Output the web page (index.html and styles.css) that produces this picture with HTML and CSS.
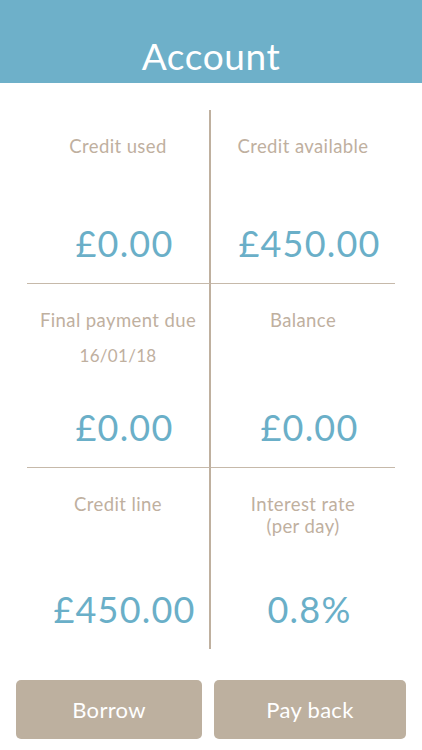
FILE: index.html
```html
<!DOCTYPE html>
<html lang="en">
  <head>
    <meta charset="UTF-8" />
    <meta name="viewport" content="width=device-width, initial-scale=1" />
    <title>Account</title>
    <link rel="stylesheet" href="styles.css">
  </head>
  <body>
    <header class="topbar">
      <h1>Account</h1>
    </header>
    <main>
      <section class="summary">
        <div class="cell left row-1">
          <div class="label">Credit used</div>
          <div class="value">£0.00</div>
        </div>
        <div class="cell right row-1">
          <div class="label">Credit available</div>
          <div class="value">£450.00</div>
        </div>
        <div class="cell left row-2">
          <div class="label">Final payment due</div>
          <div class="sub">16/01/18</div>
          <div class="value">£0.00</div>
        </div>
        <div class="cell right row-2">
          <div class="label">Balance</div>
          <div class="value">£0.00</div>
        </div>
        <div class="cell left row-3">
          <div class="label">Credit line</div>
          <div class="value">£450.00</div>
        </div>
        <div class="cell right row-3">
          <div class="label">Interest rate<br>(per day)</div>
          <div class="value">0.8%</div>
        </div>
      </section>
      <div class="actions">
        <button class="btn borrow">Borrow</button>
        <button class="btn payback">Pay back</button>
      </div>
    </main>
  </body>
</html>
```

FILE: styles.css
```css
body {
  font-family: 'Lato', 'Noto Sans', sans-serif;
  margin: 0;
  background: #fff;
  width: 422px;
  height: 750px;
  overflow: hidden;
}

.topbar {
  background-color: #6eb0c9;
  height: 83px;
  display: flex;
  align-items: flex-end;
  justify-content: center;
}

.topbar h1 {
  margin: 0 0 5px;
  color: #fff;
  font-weight: 400;
  font-size: 37px;
  line-height: 44px;
  letter-spacing: 0.6px;
}

.summary {
  margin: 27px 27px 0;
  display: grid;
  grid-template-columns: 184px 184px;
  grid-template-rows: 174px 184px 181px;
}

.cell {
  display: flex;
  flex-direction: column;
  align-items: center;
  text-align: center;
  color: #bfb09f;
  padding: 25px 0 20px;
  box-sizing: border-box;
}

.cell.left {
  border-right: 2px solid #bfb09f;
}

.cell.row-1,
.cell.row-2 {
  border-bottom: 1.5px solid #c6b9aa;
}

.label {
  font-size: 18.5px;
  line-height: 22px;
  letter-spacing: 0.4px;
}

.sub {
  margin-top: 14px;
  font-size: 17px;
  line-height: 22px;
  letter-spacing: 0.3px;
}

.value {
  margin-top: auto;
  padding-left: 13px;
  color: #6aafc8;
  font-size: 36px;
  line-height: 40px;
  letter-spacing: 1.2px;
}

.actions {
  display: flex;
  justify-content: space-between;
  padding: 31px 16px 0;
}

.btn {
  height: 59px;
  border: none;
  border-radius: 5px;
  background: #bdb09f;
  color: #fff;
  font-family: inherit;
  font-size: 22px;
  letter-spacing: 0.3px;
}

.btn.borrow {
  width: 186px;
}

.btn.payback {
  width: 192px;
}
```
